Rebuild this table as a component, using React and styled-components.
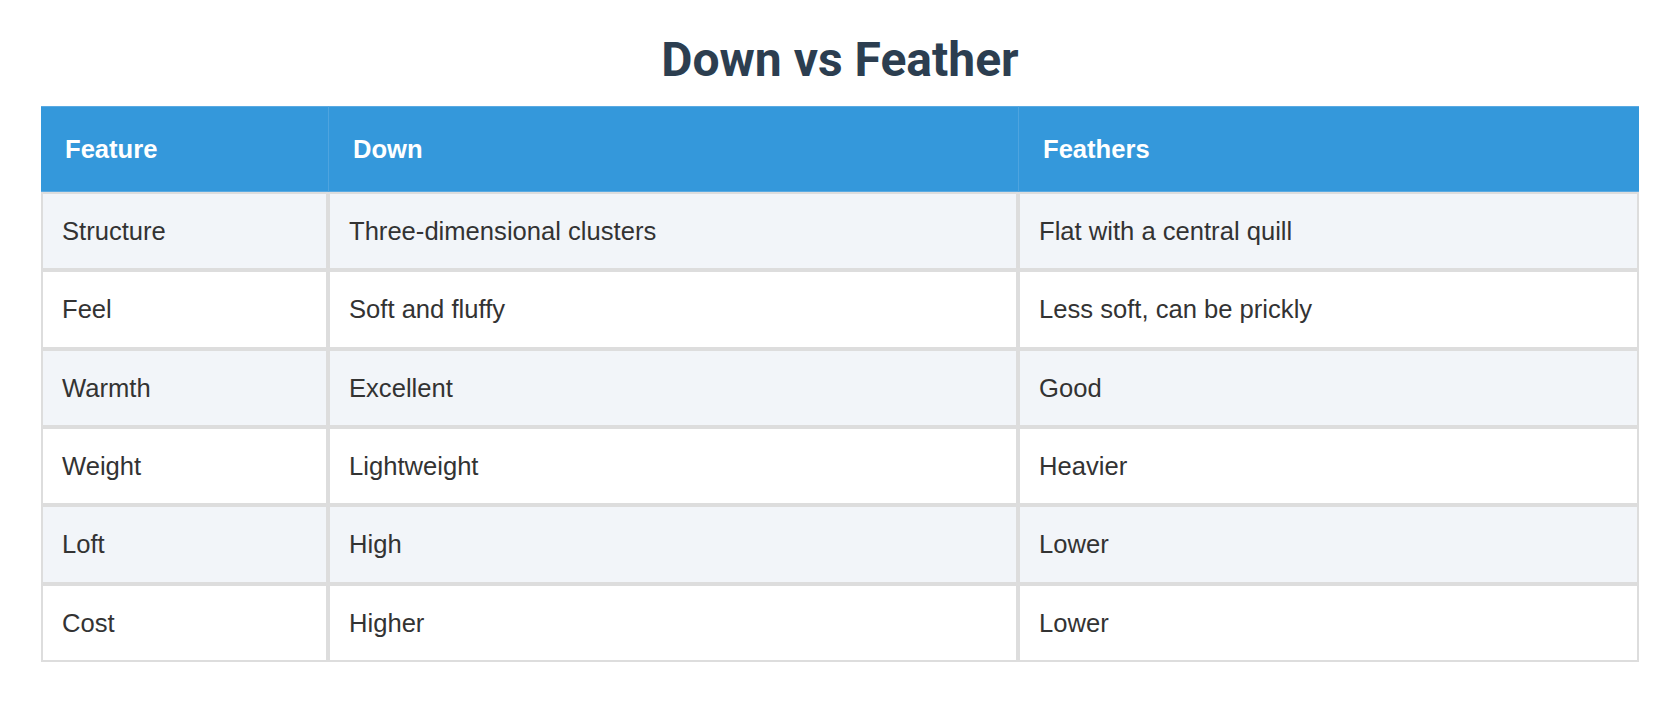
import React from 'react'
import styled, { createGlobalStyle } from 'styled-components'

const GlobalStyle = createGlobalStyle`
  html, body {
    margin: 0;
    padding: 0;
    background: #ffffff;
  }
`

const Page = styled.div`
  padding: 31px 41px 40px;
  font-family: "Liberation Sans", Arial, sans-serif;
  color: #333333;
`

const Title = styled.h1`
  margin: 0 0 18px;
  text-align: center;
  font-family: Roboto, "Liberation Sans", sans-serif;
  font-weight: 700;
  font-size: 48px;
  line-height: normal;
  color: #2c3e50;
`

const Table = styled.table`
  width: 100%;
  table-layout: fixed;
  border-collapse: separate;
  border-spacing: 0;
`

const HeadCell = styled.th`
  height: 86px;
  padding: 0 24px;
  box-sizing: border-box;
  background: #3498db;
  color: #ffffff;
  text-align: left;
  font-size: 25.6px;
  font-weight: 700;
  border-top: 1px solid #5aaae2;
  border-bottom: 1px solid #5aaae2;
  border-left: ${p => (p.$first ? 'none' : '1px solid #4ea4df')};
`

const Row = styled.tr`
  background: ${p => (p.$striped ? '#f2f5f9' : '#ffffff')};
`

const Cell = styled.td`
  padding: 22px 19px;
  border: 2px solid #dddddd;
  font-size: 25.6px;
  line-height: 30.33px;
  color: #333333;
`

const columns = ['Feature', 'Down', 'Feathers']

const rows = [
  ['Structure', 'Three-dimensional clusters', 'Flat with a central quill'],
  ['Feel', 'Soft and fluffy', 'Less soft, can be prickly'],
  ['Warmth', 'Excellent', 'Good'],
  ['Weight', 'Lightweight', 'Heavier'],
  ['Loft', 'High', 'Lower'],
  ['Cost', 'Higher', 'Lower'],
]

export default function App() {
  return (
    <>
      <GlobalStyle />
      <Page>
        <Title>Down vs Feather</Title>
        <Table>
          <colgroup>
            <col style={{ width: '287px' }} />
            <col style={{ width: '690px' }} />
            <col />
          </colgroup>
          <thead>
            <tr>
              {columns.map((c, i) => (
                <HeadCell key={c} $first={i === 0}>{c}</HeadCell>
              ))}
            </tr>
          </thead>
          <tbody>
            {rows.map((r, i) => (
              <Row key={r[0]} $striped={i % 2 === 0}>
                {r.map((v, j) => (
                  <Cell key={j}>{v}</Cell>
                ))}
              </Row>
            ))}
          </tbody>
        </Table>
      </Page>
    </>
  )
}
